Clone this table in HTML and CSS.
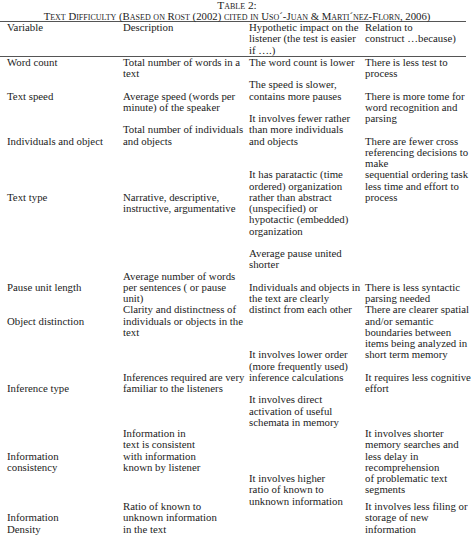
FILE: index.html
```html
<!DOCTYPE html>
<html lang="en">
<head>
<meta charset="utf-8">
<title>Table 2: Text Difficulty</title>
<link rel="stylesheet" href="styles.css">
</head>
<body>
<div class="page">
  <div class="caption">
    <div class="cap-num">Table 2:</div>
    <div class="cap-title">Text Difficulty (Based on Rost (2002) cited in Uso´-Juan &amp; Marti´nez-Florn, 2006)</div>
  </div>
  <div class="table">
    <div class="row head">
      <div class="cell">Variable</div>
      <div class="cell">Description</div>
      <div class="cell">Hypothetic impact on the<br>listener (the test is easier<br>if ….)</div>
      <div class="cell">Relation to<br>construct …because)</div>
    </div>
    <div class="row body">
      <div class="col">
        <div class="cell">Word count</div>
        <div class="cell g2">Text speed</div>
        <div class="cell g3">Individuals and object</div>
        <div class="cell g4">Text type</div>
        <div class="cell g7">Pause unit length</div>
        <div class="cell g2">Object distinction</div>
        <div class="cell g5">Inference type</div>
        <div class="cell g5">Information<br>consistency</div>
        <div class="cell g3h">Information<br>Density</div>
      </div>
      <div class="col">
        <div class="cell">Total number of words in a<br>text</div>
        <div class="cell g1">Average speed (words per<br>minute) of the speaker</div>
        <div class="cell g1">Total number of individuals<br>and objects</div>
        <div class="cell g4">Narrative, descriptive,<br>instructive, argumentative</div>
        <div class="cell g5">Average number of words<br>per sentences ( or pause<br>unit)</div>
        <div class="cell">Clarity and distinctness of<br>individuals or objects in the<br>text</div>
        <div class="cell g3">Inferences required are very<br>familiar to the listeners</div>
        <div class="cell g3">Information in<br>text is consistent<br>with information<br>known by listener</div>
        <div class="cell g2h">Ratio of known to<br>unknown information<br>in the text</div>
      </div>
      <div class="col">
        <div class="cell">The word count is lower</div>
        <div class="cell g1">The speed is slower,<br>contains more pauses</div>
        <div class="cell g1">It involves fewer rather<br>than more individuals<br>and objects</div>
        <div class="cell g2">It has paratactic (time<br>ordered) organization<br>rather than abstract<br>(unspecified) or<br>hypotactic (embedded)<br>organization</div>
        <div class="cell g1">Average pause united<br>shorter</div>
        <div class="cell g1">Individuals and objects in<br>the text are clearly<br>distinct from each other</div>
        <div class="cell g3">It involves lower order<br>(more frequently used)<br>inference calculations</div>
        <div class="cell g1">It involves direct<br>activation of useful<br>schemata in memory</div>
        <div class="cell g4">It involves higher<br>ratio of known to<br>unknown information</div>
      </div>
      <div class="col">
        <div class="cell">There is less test to<br>process</div>
        <div class="cell g1">There is more tome for<br>word recognition and<br>parsing</div>
        <div class="cell g1">There are fewer cross<br>referencing decisions to<br>make<br>sequential ordering task<br>less time and effort to<br>process</div>
        <div class="cell g7">There is less syntactic<br>parsing needed</div>
        <div class="cell">There are clearer spatial<br>and/or semantic<br>boundaries between<br>items being analyzed in<br>short term memory</div>
        <div class="cell g1">It requires less cognitive<br>effort</div>
        <div class="cell g3">It involves shorter<br>memory searches and<br>less delay in<br>recomprehension<br>of problematic text<br>segments</div>
        <div class="cell gh">It involves less filing or<br>storage of new<br>information</div>
      </div>
    </div>
  </div>
</div>
</body>
</html>
```

FILE: styles.css
```css
:root {
  --L: 11.25px;
}

html, body {
  margin: 0;
  padding: 0;
  background: #ffffff;
}

body {
  color: #1c1c1c;
  font-family: "Liberation Serif", "Times New Roman", serif;
  font-size: 10.8px;
}

.page {
  width: 474px;
}

.caption {
  width: 474px;
  text-align: center;
  font-variant: small-caps;
  white-space: nowrap;
}

.cap-num {
  font-size: 11.4px;
  line-height: 10.5px;
}

.cap-title {
  font-size: 10.75px;
  line-height: 10.5px;
}

.table {
  width: 466px;
  border-top: 1px solid #555555;
}

.row {
  display: grid;
  grid-template-columns: 116px 126px 116px 101px;
  padding-left: 7px;
}

.head {
  border-bottom: 1px solid #555555;
}

.col {
  display: flex;
  flex-direction: column;
}

.cell {
  line-height: var(--L);
  white-space: nowrap;
}

.gh { margin-top: calc(var(--L) * 0.5); }
.g1 { margin-top: var(--L); }
.g2 { margin-top: calc(var(--L) * 2); }
.g2h { margin-top: calc(var(--L) * 2.5); }
.g3 { margin-top: calc(var(--L) * 3); }
.g3h { margin-top: calc(var(--L) * 3.5); }
.g4 { margin-top: calc(var(--L) * 4); }
.g5 { margin-top: calc(var(--L) * 5); }
.g7 { margin-top: calc(var(--L) * 7); }
```
